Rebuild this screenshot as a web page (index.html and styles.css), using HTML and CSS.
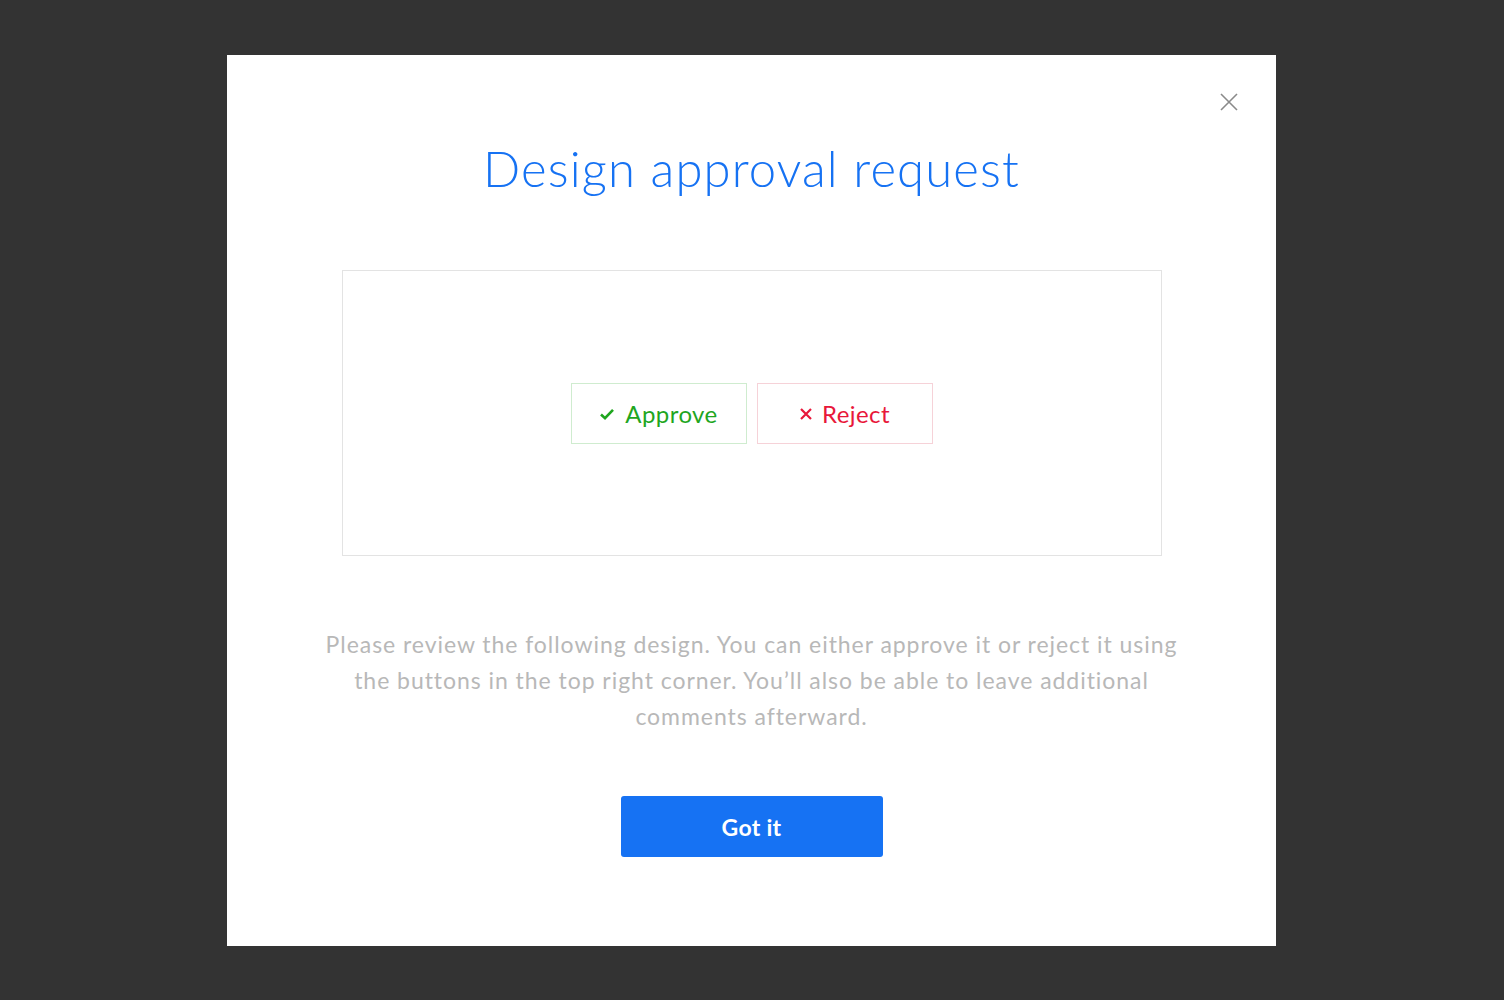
FILE: index.html
```html
<!DOCTYPE html>
<html>
<head>
<meta charset="utf-8">
<link rel="stylesheet" href="styles.css">
</head>
<body>
<div class="modal">
  <button class="close" aria-label="Close">
    <svg width="20" height="20" viewBox="0 0 20 20"><path d="M2 2 L18 18 M18 2 L2 18" stroke="#8a8a8a" stroke-width="1.6" fill="none"/></svg>
  </button>
  <h1 class="title">Design approval request</h1>
  <div class="preview">
    <button class="btn approve">
      <svg width="16" height="14" viewBox="0 0 16 14"><path d="M2 7.5 L6 11.2 L14 2.8" stroke="#1fa61f" stroke-width="2.6" fill="none"/></svg>
      <span>Approve</span>
    </button>
    <button class="btn reject">
      <svg width="14" height="14" viewBox="0 0 14 14"><path d="M2 2 L12 12 M12 2 L2 12" stroke="#e8173a" stroke-width="2.2" fill="none"/></svg>
      <span>Reject</span>
    </button>
  </div>
  <p class="desc">Please review the following design. You can either approve it or reject it using the buttons in the top right corner. You’ll also be able to leave additional comments afterward.</p>
  <button class="got">Got it</button>
</div>
</body>
</html>
```
FILE: styles.css
```css
html, body {
  margin: 0;
  padding: 0;
}
body {
  background: #333333;
  height: 1000px;
  font-family: Lato, "Open Sans", sans-serif;
  padding-top: 55px;
  box-sizing: border-box;
}
.modal {
  position: relative;
  width: 1049px;
  height: 891px;
  margin: 0 0 0 227px;
  background: #ffffff;
  display: flex;
  flex-direction: column;
  align-items: center;
  box-sizing: border-box;
}
.close {
  position: absolute;
  right: 37px;
  top: 37px;
  width: 20px;
  height: 20px;
  padding: 0;
  border: 0;
  background: none;
}
.close svg { display: block; }
.title {
  margin: 83px 0 0;
  font-weight: 300;
  font-size: 49px;
  line-height: 60px;
  color: #1672f3;
  letter-spacing: 1.15px;
}
.preview {
  margin-top: 72px;
  width: 820px;
  height: 286px;
  border: 1px solid #e3e3e3;
  box-sizing: border-box;
  display: flex;
  justify-content: center;
  align-items: center;
  gap: 10px;
}
.btn {
  width: 176px;
  height: 61px;
  background: #fff;
  display: flex;
  align-items: center;
  justify-content: center;
  gap: 10px;
  font-family: Lato, "Open Sans", sans-serif;
  font-size: 24px;
  font-weight: 400;
  padding: 0;
  box-sizing: border-box;
  margin-top: 1px;
  letter-spacing: 0.45px;
}
.btn svg { display: block; }
.approve {
  border: 1px solid #cfeccf;
  color: #1fa61f;
}
.reject {
  border: 1px solid #f6d2d8;
  color: #e8173a;
  gap: 9px;
}
.desc {
  margin: 70px 0 0;
  width: 880px;
  text-align: center;
  font-size: 23px;
  line-height: 36px;
  color: #b8b8b8;
  font-weight: 400;
  letter-spacing: 0.95px;
}
.got {
  margin-top: 62px;
  width: 262px;
  height: 61px;
  border: 0;
  border-radius: 3px;
  background: #1672f3;
  color: #ffffff;
  font-family: Lato, "Open Sans", sans-serif;
  font-size: 23px;
  font-weight: 700;
  letter-spacing: 0.3px;
  padding: 0;
}
```
